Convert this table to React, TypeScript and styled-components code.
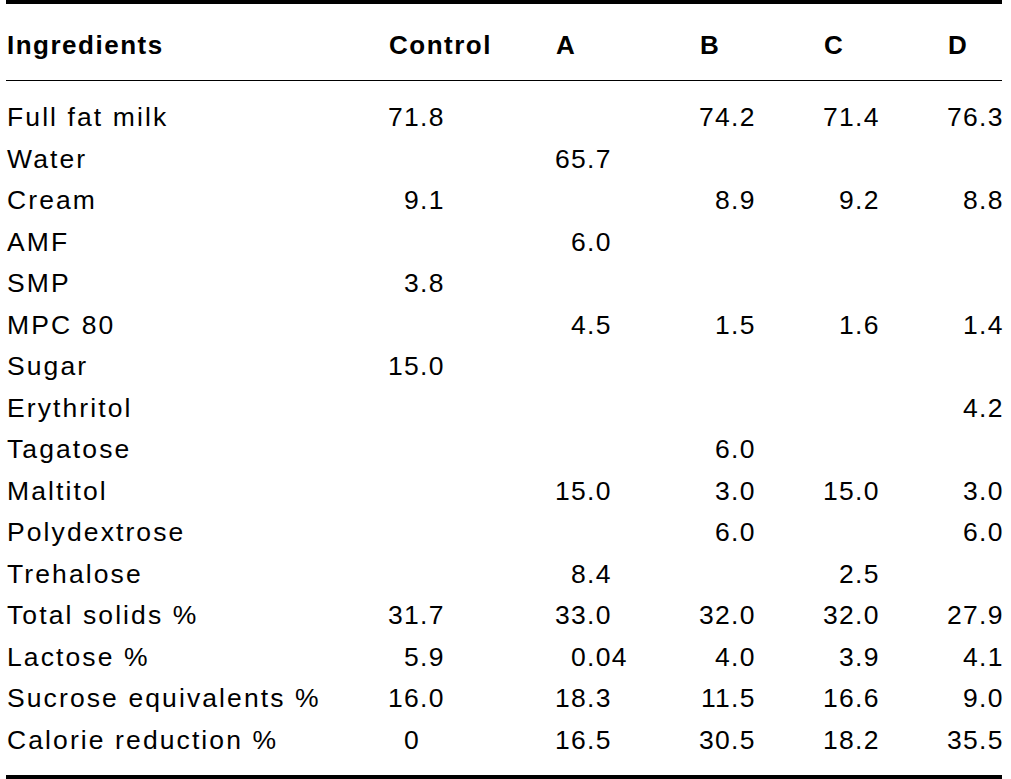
import React, { FunctionComponent } from 'react'
import styled, { createGlobalStyle } from 'styled-components'

const GlobalStyle = createGlobalStyle`
    html, body {
        margin: 0;
        padding: 0;
        background: #ffffff;
    }
    body {
        font-family: "Liberation Sans", Arial, sans-serif;
        color: #000000;
    }
`

const COLUMNS = '382px 167px 144px 124px 124px 1fr'
const ROW_HEIGHT = '41.53px'

const Sheet = styled.div`
    margin: 0 9px 0 6px;
    border-top: 4px solid #000;
    border-bottom: 4px solid #000;
`

const HeaderRow = styled.div`
    display: grid;
    grid-template-columns: ${COLUMNS};
    height: ${ROW_HEIGHT};
    line-height: ${ROW_HEIGHT};
    padding: 21.2px 0 13.3px;
    border-bottom: 1px solid #000;
`

const HeaderCell = styled.div`
    font-size: 26px;
    font-weight: 700;
    letter-spacing: 1.5px;
    padding-left: 1px;
    white-space: nowrap;
`

const Body = styled.div`
    padding: 16.2px 0 13.3px;
`

const Row = styled.div`
    display: grid;
    grid-template-columns: ${COLUMNS};
    height: ${ROW_HEIGHT};
    line-height: ${ROW_HEIGHT};
`

const Label = styled.div`
    font-size: 26.5px;
    letter-spacing: 2.1px;
    padding-left: 1px;
    white-space: nowrap;
`

const Value = styled.div`
    display: flex;
    font-size: 26.5px;
    letter-spacing: 1.3px;
    white-space: nowrap;
`

const IntPart = styled.span`
    display: inline-block;
    width: 32px;
    text-align: right;
`

const FracPart = styled.span`
    display: inline-block;
`

const headers = ['Ingredients', 'Control', 'A', 'B', 'C', 'D']

const rows: [string, string[]][] = [
    ['Full fat milk', ['71.8', '', '74.2', '71.4', '76.3']],
    ['Water', ['', '65.7', '', '', '']],
    ['Cream', ['9.1', '', '8.9', '9.2', '8.8']],
    ['AMF', ['', '6.0', '', '', '']],
    ['SMP', ['3.8', '', '', '', '']],
    ['MPC 80', ['', '4.5', '1.5', '1.6', '1.4']],
    ['Sugar', ['15.0', '', '', '', '']],
    ['Erythritol', ['', '', '', '', '4.2']],
    ['Tagatose', ['', '', '6.0', '', '']],
    ['Maltitol', ['', '15.0', '3.0', '15.0', '3.0']],
    ['Polydextrose', ['', '', '6.0', '', '6.0']],
    ['Trehalose', ['', '8.4', '', '2.5', '']],
    ['Total solids %', ['31.7', '33.0', '32.0', '32.0', '27.9']],
    ['Lactose %', ['5.9', '0.04', '4.0', '3.9', '4.1']],
    ['Sucrose equivalents %', ['16.0', '18.3', '11.5', '16.6', '9.0']],
    ['Calorie reduction %', ['0', '16.5', '30.5', '18.2', '35.5']],
]

// numbers line up on the decimal point
const DecimalValue: FunctionComponent<{ value: string }> = ({ value }) => {
    if (!value) return <Value />
    const [whole, frac] = value.split('.')
    return (
        <Value>
            <IntPart>{whole}</IntPart>
            {frac !== undefined && <FracPart>.{frac}</FracPart>}
        </Value>
    )
}

const App: FunctionComponent = () => {
    return (
        <>
            <GlobalStyle />
            <Sheet>
                <HeaderRow>
                    {headers.map((h) => (
                        <HeaderCell key={h}>{h}</HeaderCell>
                    ))}
                </HeaderRow>
                <Body>
                    {rows.map(([label, values]) => (
                        <Row key={label}>
                            <Label>{label}</Label>
                            {values.map((v, i) => (
                                <DecimalValue key={i} value={v} />
                            ))}
                        </Row>
                    ))}
                </Body>
            </Sheet>
        </>
    )
}

export default App
